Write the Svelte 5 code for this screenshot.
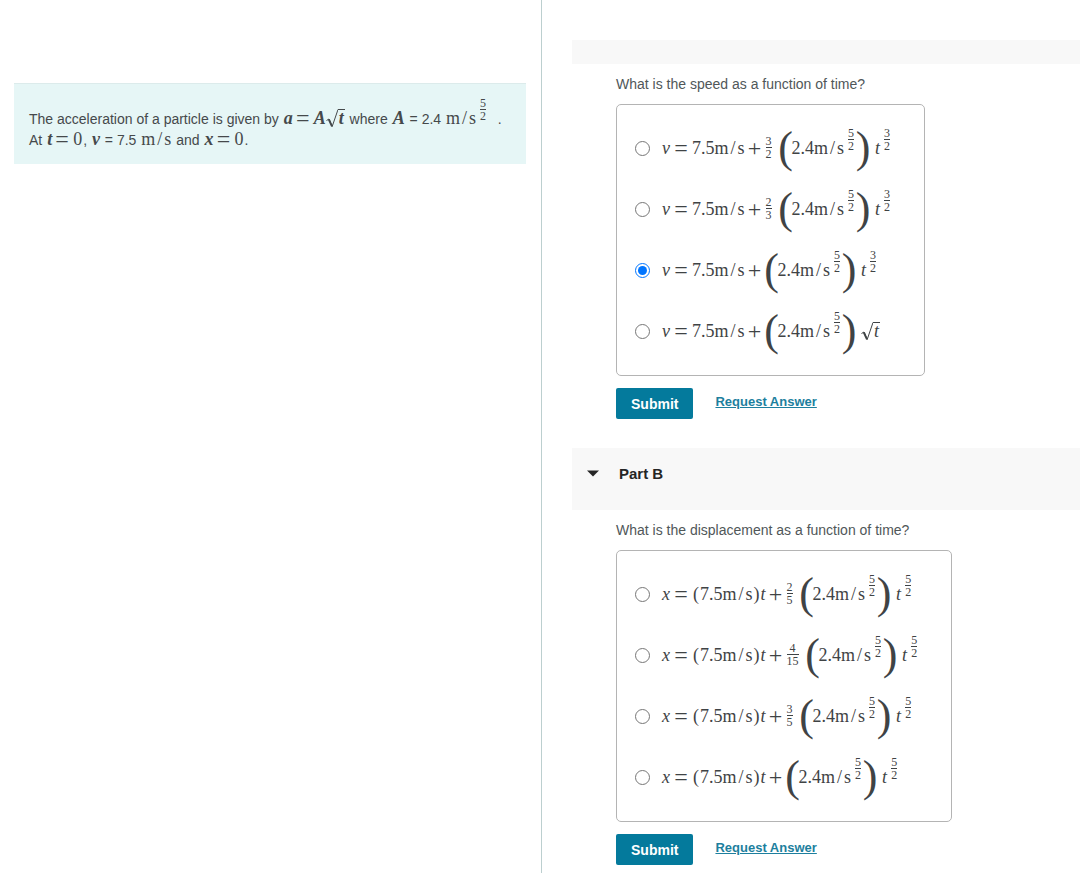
<script lang="ts">
  type Choice = {
    coef?: [string, string];
    power?: [string, string];
  };

  type Part = {
    id: string;
    title: string;
    question: string;
    variable: string;
    timesT: boolean;
    choices: Choice[];
  };

  const parts: Part[] = [
    {
      id: "a",
      title: "",
      question: "What is the speed as a function of time?",
      variable: "v",
      timesT: false,
      choices: [
        { coef: ["3", "2"], power: ["3", "2"] },
        { coef: ["2", "3"], power: ["3", "2"] },
        { power: ["3", "2"] },
        {},
      ],
    },
    {
      id: "b",
      title: "Part B",
      question: "What is the displacement as a function of time?",
      variable: "x",
      timesT: true,
      choices: [
        { coef: ["2", "5"], power: ["5", "2"] },
        { coef: ["4", "15"], power: ["5", "2"] },
        { coef: ["3", "5"], power: ["5", "2"] },
        { power: ["5", "2"] },
      ],
    },
  ];

  let selected: Record<string, number | null> = $state({ a: 2, b: null });
</script>

{#snippet frac(top: string, bottom: string)}
  <span class="frac"><span class="num">{top}</span><span>{bottom}</span></span>
{/snippet}

{#snippet root()}
  <span class="root">
    <svg class="tick" viewBox="0 0 12 20" aria-hidden="true">
      <path d="M0.5 12.5 L3 11 L6.2 18.5 L12 1.5" fill="none" stroke="currentColor" stroke-width="1" />
      <path d="M2.8 11.3 L6 18.3" fill="none" stroke="currentColor" stroke-width="2" />
    </svg>
    <i class="radicand">t</i>
  </span>
{/snippet}

{#snippet speedUnit()}
  <span>m</span><span class="slash">/</span><span>s</span>
{/snippet}

<main class="page">
  <section class="intro">
    <p class="problem">
      The acceleration of a particle is given by
      <span class="math"><i>a</i><span class="op">=</span><i>A</i>{@render root()}</span>
      where <span class="math"><i>A</i></span> = 2.4
      <span class="math">{@render speedUnit()}<span class="sup">{@render frac("5", "2")}</span></span>&nbsp; .<br />
      At <span class="math"><i>t</i><span class="op">=</span><span>0</span></span>,
      <span class="math"><i>v</i></span> = 7.5
      <span class="math">{@render speedUnit()}</span> and
      <span class="math"><i>x</i><span class="op">=</span><span>0</span></span>.
    </p>
  </section>

  <section class="parts">
    {#each parts as part (part.id)}
      <header class="bar" class:titled={part.title}>
        {#if part.title}
          <button class="toggle" type="button">
            <svg class="caret" viewBox="0 0 12 7" aria-hidden="true"><path d="M0 0.5 H12 L6 6.5 Z" fill="currentColor" /></svg>
            {part.title}
          </button>
        {/if}
      </header>

      <form class="body" onsubmit={(e) => e.preventDefault()}>
        <p class="question" id="question-{part.id}">{part.question}</p>
        <div class="choices" role="radiogroup" aria-labelledby="question-{part.id}">
          {#each part.choices as choice, i}
            <label class="choice">
              <input type="radio" name="part-{part.id}" value={i} bind:group={selected[part.id]} />
              <span class="math">
                <i class="variable">{part.variable}</i>
                <span class="op">=</span>
                {#if part.timesT}<span class="bracket">(</span>{/if}
                <span>7.5</span>{@render speedUnit()}
                {#if part.timesT}<span class="bracket">)</span><i>t</i>{/if}
                <span class="op">+</span>
                {#if choice.coef}
                  <span class="coef">{@render frac(choice.coef[0], choice.coef[1])}</span>
                {/if}
                <span class="paren">(</span>
                <span>2.4</span>{@render speedUnit()}
                <span class="sup">{@render frac("5", "2")}</span>
                <span class="paren close">)</span>
                {#if choice.power}
                  <i>t</i><span class="sup">{@render frac(choice.power[0], choice.power[1])}</span>
                {:else}
                  {@render root()}
                {/if}
              </span>
            </label>
          {/each}
        </div>
        <div class="actions">
          <button class="submit" type="submit">Submit</button>
          <a class="request" href="#question-{part.id}">Request Answer</a>
        </div>
      </form>
    {/each}
  </section>
</main>

<style>
  :global(body) {
    background: #fff;
  }

  .page {
    display: grid;
    grid-template-columns: calc(50% + 2px) 1fr;
    min-height: 100vh;
    font-family: "Liberation Sans", Arial, sans-serif;
    font-size: 14px;
    line-height: 20px;
    color: #505759;
  }

  .intro {
    padding: 83px 15px 0 14px;
    border-right: 1px solid #bccfcf;
  }
  .problem {
    margin: 0;
    padding: 24px 10px 14px 15px;
    background: #e6f6f6;
    border-top: 1px solid #dcebeb;
    color: #45494b;
  }
  .problem i {
    font-weight: bold;
  }
  .problem .math {
    margin: 0 1px;
  }

  .parts {
    padding: 40px 0 0 30px;
  }
  .bar {
    min-height: 24px;
    background: #f8f8f8;
  }
  .bar.titled {
    display: flex;
    align-items: center;
    min-height: 62px;
    padding: 0 15px;
    box-sizing: border-box;
  }
  .toggle {
    display: flex;
    align-items: center;
    gap: 20px;
    padding: 0 0 11px;
    border: 0;
    background: none;
    color: #252525;
    font: bold 15px/20px "Liberation Sans", Arial, sans-serif;
    cursor: pointer;
  }
  .caret {
    width: 12px;
    height: 7px;
  }

  .body {
    padding: 10px 16px 29px 44px;
  }
  .question {
    margin: 0 0 10px;
  }
  .choices {
    width: fit-content;
    padding: 13px 31px 13px 18px;
    border: 1px solid #b4b4b4;
    border-radius: 5px;
  }
  .choice {
    display: flex;
    align-items: center;
    gap: 12px;
    height: 61px;
    color: #3f4345;
    cursor: pointer;
  }
  .choice input {
    width: 15px;
    height: 15px;
    margin: 0;
    accent-color: #0075ff;
  }
  .choice .math {
    padding-bottom: 2px;
  }

  .math {
    display: inline-flex;
    align-items: center;
    font-family: "Liberation Serif", "Times New Roman", serif;
    font-size: 18px;
    line-height: 20px;
    white-space: nowrap;
  }
  .variable {
    width: 9px;
  }
  .op {
    width: 14px;
    margin: 0 4px 0 3px;
    font-size: 24px;
    text-align: center;
  }
  .slash {
    padding: 0 2px;
  }
  .bracket {
    margin: 0 1px;
  }
  .frac {
    display: flex;
    flex-direction: column;
    align-items: center;
    gap: 1px;
    font-size: 12px;
    line-height: 11px;
  }
  .num {
    align-self: stretch;
    border-bottom: 1px solid currentColor;
    text-align: center;
  }
  .coef {
    margin-right: 8px;
  }
  .sup {
    margin: -10px 3px 6px 4px;
  }
  .paren {
    display: flex;
    justify-content: center;
    width: 12px;
    font-size: 44px;
    line-height: 44px;
  }
  .paren.close {
    margin-right: 6px;
  }
  .root {
    display: flex;
    align-items: center;
  }
  .tick {
    width: 12px;
    height: 20px;
  }
  .radicand {
    padding: 0 1px;
    border-top: 1px solid currentColor;
    line-height: 17px;
  }

  .actions {
    display: flex;
    align-items: center;
    gap: 22px;
    margin-top: 12px;
  }
  .submit {
    height: 31px;
    padding: 0 15px;
    border: 0;
    border-radius: 2px;
    background: #047a9c;
    color: #fff;
    font: bold 14px/20px "Liberation Sans", Arial, sans-serif;
    cursor: pointer;
  }
  .request {
    padding-bottom: 3px;
    color: #1d7f9e;
    font-size: 13px;
    font-weight: bold;
  }
</style>
